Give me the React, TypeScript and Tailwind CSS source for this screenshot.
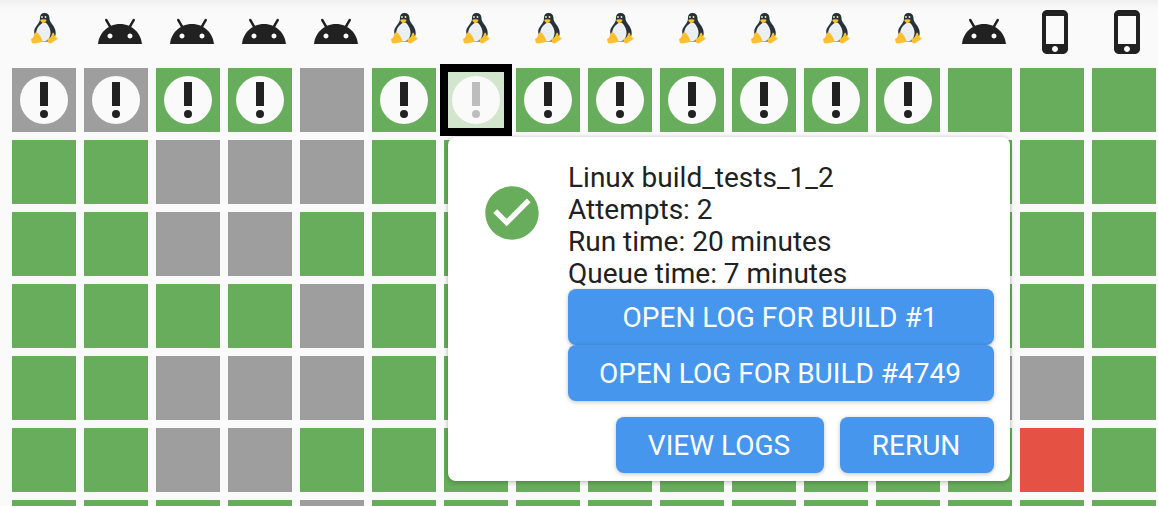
import React from "react";

type Platform = "linux" | "android" | "ios";

const platforms: Platform[] = [
  "linux", "android", "android", "android", "android", "linux", "linux", "linux",
  "linux", "linux", "linux", "linux", "linux", "android", "ios", "ios",
];

// g = green, x = grey, r = red
const rows = [
  "xxggxggggggggggg",
  "ggxxxggggggggggg",
  "ggxxgggggggggggg",
  "ggggxggggggggggg",
  "ggxxxggggggggxxg",
  "ggxxggggggggggrg",
  "ggggxggggggggggg",
];

const tileColors: Record<string, string> = {
  g: "bg-[#67ad5b]",
  x: "bg-[#9e9e9e]",
  r: "bg-[#e55244]",
};

const Penguin = () => (
  <svg width="28" height="32" viewBox="0 0 28 32" className="mt-[4px]">
    <path d="M14.600 1C11.500 1 10 3 10 5.500c0 3-.5 4.500-2.500 7C5 15.500 3.800 18 4.300 21l2.200 8.500H22c3-3 4.300-7 3.500-10.500-.5-3-2-5-3.500-7-2-2.500-2.500-4-2.600-6.500C19.400 3 17.500 1 14.600 1z" fill="#263238" />
    <path d="M13.500 10.500C11 11.500 7 15 6.200 20c-.4 4.500 2.800 9.500 7.300 9.500s7.300-4.500 7-9.500c-.3-4.500-3.500-8.500-5-9.500-.7.500-1.300.5-2 0z" fill="#eceff1" />
    <path d="M10.300 8c1-.8 5-.9 6.200 0 .4.500-1.800 3-3.200 3.200-1.200 0-3.400-2.500-3-3.200z" fill="#fbc02d" />
    <circle cx="12" cy="5" r=".9" fill="#eceff1" />
    <circle cx="15.500" cy="5" r=".9" fill="#eceff1" />
    <path d="M5.500 20.500c2-.5 3.500 1 4.500 3l2 4c.5 1.500-.5 2.500-2 3l-6 1c-2 0-2.500-1-2.500-2L1 27c1.500-1 2.500-1.500 3-3.500.3-1.500.7-2.500 1.500-3z" fill="#fbc02d" />
    <path d="M23 20.500c1 .5 1.300 1.500 1.500 2.500.3 1.500 1.500 2.500 3 3 .3.800-.5 1.500-1.500 2l-4.500 3c-1.500.8-3 .2-3.500-1l-1-2.500c1.500-.5 3.500-1.500 4.500-4 .5-1.500.8-2.500 1.500-3z" fill="#fbc02d" />
  </svg>
);

const PlatformIcon = ({ platform }: { platform: Platform }) => {
  if (platform === "linux") return <Penguin />;
  if (platform === "android") {
    return (
      <svg width="48" height="48" viewBox="0 0 24 24" fill="#212121">
        <path d="M17.6 9.48l1.84-3.18c.16-.31.04-.69-.26-.85-.29-.15-.65-.06-.83.22l-1.88 3.24c-2.86-1.21-6.08-1.21-8.94 0L5.650 5.670c-.19-.29-.58-.38-.87-.2-.28.18-.37.54-.22.83L6.400 9.480C3.300 11.250 1.340 14.420 1 18h22c-.34-3.580-2.300-6.750-5.400-8.520zM7 15.250c-.69 0-1.250-.56-1.250-1.250s.56-1.250 1.250-1.250 1.250.56 1.250 1.250-.56 1.250-1.250 1.250zm10 0c-.69 0-1.250-.56-1.250-1.250s.56-1.250 1.250-1.250 1.250.56 1.250 1.250-.56 1.250-1.250 1.250z" />
      </svg>
    );
  }
  return (
    <svg width="48" height="48" viewBox="0 0 24 24" fill="#212121">
      <path d="M15.500 1h-8C6.120 1 5 2.120 5 3.500v17C5 21.880 6.120 23 7.500 23h8c1.380 0 2.500-1.120 2.500-2.500v-17C18 2.120 16.880 1 15.500 1zm-4 21c-.83 0-1.500-.67-1.500-1.500s.67-1.500 1.500-1.500 1.500.67 1.500 1.500-.67 1.500-1.500 1.500zm4.500-4H7V4h9v14z" />
    </svg>
  );
};

const Flag = ({ faded }: { faded?: boolean }) => (
  <div className="w-12 h-12 rounded-full bg-[#fafafa] flex flex-col items-center pt-[6px]">
    <div className={`w-2 h-6 ${faded ? "bg-[#bdbdbd]" : "bg-[#212121]"}`} />
    <div className={`w-2 h-2 rounded-full mt-1 ${faded ? "bg-[#bdbdbd]" : "bg-[#212121]"}`} />
  </div>
);

const ActionButton = ({ label, className }: { label: string; className: string }) => (
  <button className={`h-14 pt-px pr-0.5 rounded-lg bg-[#4596ec] text-white text-[28px] shadow-[0_1px_4px_rgba(0,0,0,0.25)] ${className}`}>
    {label}
  </button>
);

export default function App() {
  return (
    <div
      className="relative h-screen overflow-hidden bg-[#fafafa] text-[#212121]"
      style={{ fontFamily: "Roboto, sans-serif" }}
    >
      {/* Platform header */}
      <div className="flex h-[68px] pl-2 bg-linear-to-b from-[#f0f0f0] to-[#fafafa] to-[10px]">
        {platforms.map((platform, i) => (
          <div
            key={i}
            className={`w-[72px] shrink-0 flex justify-center pt-2 ${platform === "linux" ? "" : "pl-2"}`}
          >
            <PlatformIcon platform={platform} />
          </div>
        ))}
      </div>

      {/* Task grid */}
      <div className="flex flex-col gap-2 pl-3">
        {rows.map((row, r) => (
          <div key={r} className="flex gap-2">
            {row.split("").map((status, c) => {
              const hasFlag = r === 0 && c < 13 && c !== 4;
              const selected = r === 0 && c === 6;
              if (selected) {
                return (
                  <div
                    key={c}
                    className="w-16 h-16 shrink-0 box-border border-4 border-black outline-4 outline-black bg-[#d2e6ce] flex items-center justify-center"
                  >
                    <Flag faded />
                  </div>
                );
              }
              return (
                <div
                  key={c}
                  className={`w-16 h-16 shrink-0 flex items-center justify-center ${tileColors[status]}`}
                >
                  {hasFlag && <Flag />}
                </div>
              );
            })}
          </div>
        ))}
      </div>

      {/* Task details overlay */}
      <div className="absolute z-10 left-[448px] top-[137px] w-[562px] h-[344px] bg-white rounded-lg shadow-[0_1px_5px_rgba(0,0,0,0.3)] pt-6 pr-4 pb-2 pl-8 flex gap-6">
        <svg width="64" height="64" viewBox="0 0 24 24" fill="#67ad5b" className="mt-5 shrink-0">
          <path d="M12 2C6.480 2 2 6.480 2 12s4.480 10 10 10 10-4.480 10-10S17.520 2 12 2zm-2 15l-5-5 1.410-1.410L10 14.170l7.590-7.590L19 8l-9 9z" />
        </svg>
        <div className="flex-1 flex flex-col">
          <div className="text-[28px] leading-8 pt-px -mb-px">
            <div>Linux build_tests_1_2</div>
            <div>Attempts: 2</div>
            <div>Run time: 20 minutes</div>
            <div>Queue time: 7 minutes</div>
          </div>
          <ActionButton label="OPEN LOG FOR BUILD #1" className="w-full" />
          <ActionButton label="OPEN LOG FOR BUILD #4749" className="w-full" />
          <div className="flex justify-end gap-4 mt-4">
            <ActionButton label="VIEW LOGS" className="w-[208px]" />
            <ActionButton label="RERUN" className="w-[154px]" />
          </div>
        </div>
      </div>
    </div>
  );
}
